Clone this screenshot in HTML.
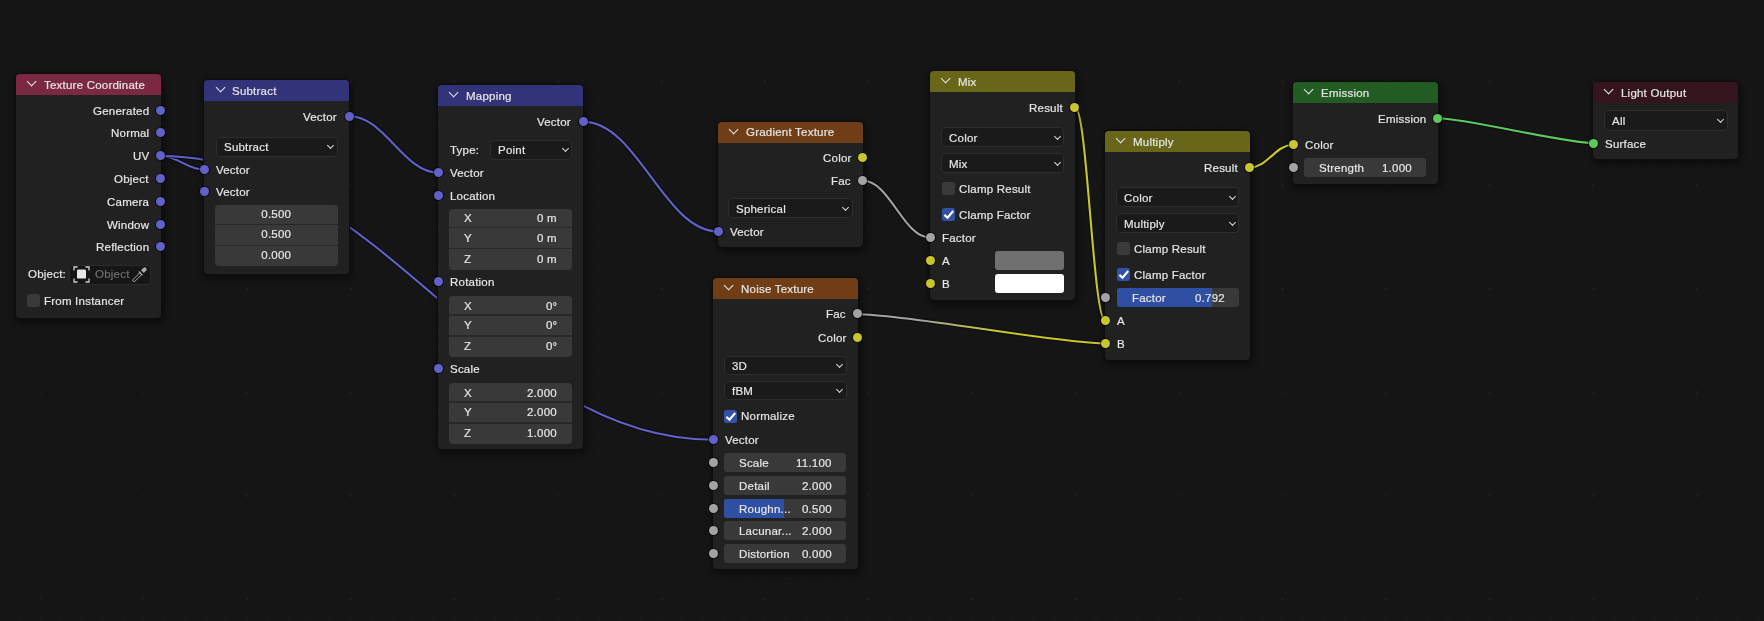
<!DOCTYPE html>
<html><head><meta charset="utf-8"><style>
*{margin:0;padding:0;box-sizing:border-box}
html,body{width:1764px;height:621px;overflow:hidden;background:#151515}
body{position:relative;font-family:"Liberation Sans",sans-serif;font-size:11.5px;letter-spacing:0.22px;color:#e6e6e6;-webkit-text-stroke-width:0.2px}
#grid{position:absolute;left:0;top:0;width:1764px;height:621px;
 background-image:radial-gradient(circle at 50% 50%, #202020 0.8px, transparent 1.4px), radial-gradient(circle at 50% 50%, #1b1b1b 0.7px, transparent 1.3px);
 background-size:103.555px 103.555px, 20.711px 20.711px;background-position:-11.58px 29.9px, 9.15px 9.25px}
#wires{position:absolute;left:0;top:0}
.node{position:absolute;background:#212121;border-radius:4px;box-shadow:0 0 0 1px #0d0d0d, 1px 3px 7px 2px rgba(0,0,0,0.45)}
.hdr{position:absolute;left:0;top:0;right:0;border-radius:4px 4px 0 0}
.chev{position:absolute;left:12.3px;top:4px;width:7.2px;height:7.2px;border-right:1.3px solid #e8e8e8;border-bottom:1.3px solid #e8e8e8;transform:rotate(45deg)}
.ttl{position:absolute;left:27.5px;top:4.5px;white-space:nowrap}
.sock{position:absolute;width:9px;height:9px;border-radius:50%;box-shadow:0 0 0 1px rgba(0,0,0,0.55)}
.lbl{position:absolute;white-space:nowrap;line-height:14px}
.dd{position:absolute;background:#1a1a1a;border:1px solid #2d2d2d;border-radius:4px}
.ddt{position:absolute;left:7px;top:2.4px;line-height:14px}
.ddc{position:absolute;right:3.5px;top:5.5px;width:5px;height:5px;border-right:1.3px solid #ddd;border-bottom:1.3px solid #ddd;transform:rotate(45deg)}
.cb{position:absolute;width:13px;height:13px;border-radius:2.5px;background:#3a3a3a}
.cb.on{background:#3352a5}
.vf{position:absolute;background:#393939;border-radius:4px;overflow:hidden}
.vf .sep{position:absolute;left:0;right:0;height:1.2px;background:#282828}
.vf .c{position:absolute;left:0;right:0;text-align:center;line-height:14px}
.vf .k{position:absolute;left:15px;line-height:14px}
.vf .v{position:absolute;right:14.5px;line-height:14px}
.sl{position:absolute;background:#393939;border-radius:3px;overflow:hidden}
.sl .fill{position:absolute;left:0;top:0;bottom:0;background:#2f4fa3}
.sl .sn{position:absolute;left:15px;top:3px;line-height:14px}
.sl .sv{position:absolute;right:14px;top:3px;line-height:14px}
.objf{position:absolute;background:#161616;border:1px solid #2a2a2a;border-radius:4px}
.objf .ph{position:absolute;left:25px;top:1px;color:#6e6e6e;line-height:14px}
.sw{position:absolute;border-radius:3px}
.r{text-align:right}
.lbl,.ttl,.ddt,.vf span,.sl span,.ph{will-change:transform}
</style></head>
<body><div id="grid"></div>
<svg id="wires" width="1764" height="621"><defs><linearGradient id="g1" gradientUnits="userSpaceOnUse" x1="858" y1="0" x2="1105" y2="0"><stop offset="0.25" stop-color="#a3a3a3"/><stop offset="0.58" stop-color="#c7c72b"/></linearGradient></defs><path d="M160.8,156.0 C178.3,156.0 187.0,169.8 204.5,169.8" stroke="#0c0c0c" stroke-width="4.5" fill="none" opacity="0.7"/><path d="M160.8,156.0 C178.3,156.0 187.0,169.8 204.5,169.8" stroke="#6161c9" stroke-width="2.1" fill="none"/><path d="M160.8,156.0 C381.7,156.0 492.2,439.8 713.1,439.8" stroke="#0c0c0c" stroke-width="4.5" fill="none" opacity="0.7"/><path d="M160.8,156.0 C381.7,156.0 492.2,439.8 713.1,439.8" stroke="#6161c9" stroke-width="2.1" fill="none"/><path d="M349.5,116.3 C385.1,116.3 403.0,172.7 438.6,172.7" stroke="#0c0c0c" stroke-width="4.5" fill="none" opacity="0.7"/><path d="M349.5,116.3 C385.1,116.3 403.0,172.7 438.6,172.7" stroke="#6161c9" stroke-width="2.1" fill="none"/><path d="M583.6,121.9 C637.4,121.9 664.3,231.5 718.1,231.5" stroke="#0c0c0c" stroke-width="4.5" fill="none" opacity="0.7"/><path d="M583.6,121.9 C637.4,121.9 664.3,231.5 718.1,231.5" stroke="#6161c9" stroke-width="2.1" fill="none"/><path d="M863.1,180.8 C889.9,180.8 903.3,237.7 930.1,237.7" stroke="#0c0c0c" stroke-width="4.5" fill="none" opacity="0.7"/><path d="M863.1,180.8 C889.9,180.8 903.3,237.7 930.1,237.7" stroke="#a3a3a3" stroke-width="2.1" fill="none"/><path d="M1075.1,107.1 C1087.1,107.1 1093.1,320.4 1105.1,320.4" stroke="#0c0c0c" stroke-width="4.5" fill="none" opacity="0.7"/><path d="M1075.1,107.1 C1087.1,107.1 1093.1,320.4 1105.1,320.4" stroke="#c7c72b" stroke-width="2.1" fill="none"/><path d="M857.9,314.2 C907.3,314.2 1055.7,343.3 1105.1,343.3" stroke="#0c0c0c" stroke-width="4.5" fill="none" opacity="0.7"/><path d="M857.9,314.2 C907.3,314.2 1055.7,343.3 1105.1,343.3" stroke="url(#g1)" stroke-width="2.1" fill="none"/><path d="M1250.1,167.5 C1267.3,167.5 1275.8,144.7 1293.0,144.7" stroke="#0c0c0c" stroke-width="4.5" fill="none" opacity="0.7"/><path d="M1250.1,167.5 C1267.3,167.5 1275.8,144.7 1293.0,144.7" stroke="#c7c72b" stroke-width="2.1" fill="none"/><path d="M1437.6,118.3 C1465.6,118.3 1565.0,143.2 1593.0,143.2" stroke="#0c0c0c" stroke-width="4.5" fill="none" opacity="0.7"/><path d="M1437.6,118.3 C1465.6,118.3 1565.0,143.2 1593.0,143.2" stroke="#5ec75e" stroke-width="2.1" fill="none"/></svg>
<div class="node" style="left:16px;top:74px;width:145px;height:244px"><div class="hdr" style="height:21px;background:#7b2942"><span class="chev"></span><span class="ttl">Texture Coordinate</span></div><div class="lbl r" style="right:12px;top:29.5px">Generated</div><div class="sock" style="left:140.4px;top:31.5px;background:#6161c9"></div><div class="lbl r" style="right:12px;top:52.3px">Normal</div><div class="sock" style="left:140.4px;top:54.3px;background:#6161c9"></div><div class="lbl r" style="right:12px;top:75.1px">UV</div><div class="sock" style="left:140.4px;top:77.1px;background:#6161c9"></div><div class="lbl r" style="right:12px;top:97.9px">Object</div><div class="sock" style="left:140.4px;top:99.9px;background:#6161c9"></div><div class="lbl r" style="right:12px;top:120.7px">Camera</div><div class="sock" style="left:140.4px;top:122.7px;background:#6161c9"></div><div class="lbl r" style="right:12px;top:143.5px">Window</div><div class="sock" style="left:140.4px;top:145.5px;background:#6161c9"></div><div class="lbl r" style="right:12px;top:166.3px">Reflection</div><div class="sock" style="left:140.4px;top:168.3px;background:#6161c9"></div><div class="lbl " style="left:11.5px;top:193.0px">Object:</div><div class="objf" style="left:52.5px;top:191.3px;width:82px;height:19.6px"><svg width="17" height="17" style="position:absolute;left:3px;top:-0.5px" viewBox="0 0 17 17"><path d="M1 4.5V1h3.5M12.5 1H16v3.5M16 12.5V16h-3.5M4.5 16H1v-3.5" stroke="#cfcfcf" stroke-width="1.3" fill="none"/><rect x="4" y="3.6" width="9" height="9" rx="1.2" fill="#e8e8e8"/></svg><span class="ph">Object</span><svg width="17" height="17" style="position:absolute;left:61px;top:-0.5px" viewBox="0 0 17 17"><path d="M2.2 15.2l-0.6-1.2 7.2-7.2 1.8 1.8-7.2 7.2z" stroke="#a8a8a8" stroke-width="1" fill="none"/><path d="M7.8 5.6l3.6 3.6" stroke="#a8a8a8" stroke-width="1.4"/><path d="M10 4.2l2.3-2.3a1.6 1.6 0 0 1 2.8 2.8L12.8 7z" fill="#a8a8a8"/></svg></div><div class="cb" style="left:11px;top:220.4px"></div><div class="lbl " style="left:28px;top:220.2px">From Instancer</div></div><div class="node" style="left:204.4px;top:80px;width:145px;height:193.5px"><div class="hdr" style="height:21px;background:#33337a"><span class="chev"></span><span class="ttl">Subtract</span></div><div class="lbl r" style="right:12px;top:29.8px">Vector</div><div class="sock" style="left:140.4px;top:31.8px;background:#6161c9"></div><div class="dd" style="left:11.5px;top:56.6px;width:122px;height:20px"><span class="ddt">Subtract</span><span class="ddc"></span></div><div class="lbl " style="left:11.5px;top:83.3px">Vector</div><div class="sock" style="left:-4.5px;top:85.3px;background:#6161c9"></div><div class="lbl " style="left:11.5px;top:105.2px">Vector</div><div class="sock" style="left:-4.5px;top:107.2px;background:#6161c9"></div><div class="vf" style="left:11px;top:124.6px;width:122.5px;height:61.9px"><span class="c" style="top:2.9px">0.500</span><span class="c" style="top:22.7px">0.500</span><span class="c" style="top:43.8px">0.000</span><div class="sep" style="top:19.1px"></div><div class="sep" style="top:40.3px"></div></div></div><div class="node" style="left:438.2px;top:85.2px;width:145px;height:364px"><div class="hdr" style="height:21px;background:#33337a"><span class="chev"></span><span class="ttl">Mapping</span></div><div class="lbl r" style="right:12px;top:30.2px">Vector</div><div class="sock" style="left:140.4px;top:32.2px;background:#6161c9"></div><div class="lbl " style="left:11.5px;top:58.0px">Type:</div><div class="dd" style="left:52px;top:54.5px;width:82px;height:20px"><span class="ddt">Point</span><span class="ddc"></span></div><div class="lbl " style="left:11.5px;top:81.0px">Vector</div><div class="sock" style="left:-4.5px;top:83.0px;background:#6161c9"></div><div class="lbl " style="left:11.5px;top:103.4px">Location</div><div class="sock" style="left:-4.5px;top:105.4px;background:#6161c9"></div><div class="vf" style="left:11px;top:123.6px;width:122.5px;height:60.8px"><span class="k" style="top:2.5px">X</span><span class="v" style="top:2.5px">0 m</span><span class="k" style="top:21.8px">Y</span><span class="v" style="top:21.8px">0 m</span><span class="k" style="top:42.8px">Z</span><span class="v" style="top:42.8px">0 m</span><div class="sep" style="top:18.3px"></div><div class="sep" style="top:39.3px"></div></div><div class="lbl " style="left:11.5px;top:190.2px">Rotation</div><div class="sock" style="left:-4.5px;top:192.2px;background:#6161c9"></div><div class="vf" style="left:11px;top:210.9px;width:122.5px;height:60.8px"><span class="k" style="top:2.5px">X</span><span class="v" style="top:2.5px">0°</span><span class="k" style="top:21.8px">Y</span><span class="v" style="top:21.8px">0°</span><span class="k" style="top:42.8px">Z</span><span class="v" style="top:42.8px">0°</span><div class="sep" style="top:18.3px"></div><div class="sep" style="top:39.3px"></div></div><div class="lbl " style="left:11.5px;top:277.2px">Scale</div><div class="sock" style="left:-4.5px;top:279.2px;background:#6161c9"></div><div class="vf" style="left:11px;top:297.9px;width:122.5px;height:60.8px"><span class="k" style="top:2.5px">X</span><span class="v" style="top:2.5px">2.000</span><span class="k" style="top:21.8px">Y</span><span class="v" style="top:21.8px">2.000</span><span class="k" style="top:42.8px">Z</span><span class="v" style="top:42.8px">1.000</span><div class="sep" style="top:18.3px"></div><div class="sep" style="top:39.3px"></div></div></div><div class="node" style="left:718.1px;top:121.6px;width:145px;height:125.5px"><div class="hdr" style="height:21px;background:#703e16"><span class="chev"></span><span class="ttl">Gradient Texture</span></div><div class="lbl r" style="right:12px;top:29.7px">Color</div><div class="sock" style="left:140.4px;top:31.7px;background:#c7c72b"></div><div class="lbl r" style="right:12px;top:52.7px">Fac</div><div class="sock" style="left:140.4px;top:54.7px;background:#a3a3a3"></div><div class="dd" style="left:10px;top:76.7px;width:124.8px;height:20.2px"><span class="ddt">Spherical</span><span class="ddc"></span></div><div class="lbl " style="left:11.5px;top:103.4px">Vector</div><div class="sock" style="left:-4.5px;top:105.4px;background:#6161c9"></div></div><div class="node" style="left:713.1px;top:278.2px;width:145px;height:290.7px"><div class="hdr" style="height:21px;background:#703e16"><span class="chev"></span><span class="ttl">Noise Texture</span></div><div class="lbl r" style="right:12px;top:29.1px">Fac</div><div class="sock" style="left:140.4px;top:31.1px;background:#a3a3a3"></div><div class="lbl r" style="right:12px;top:52.4px">Color</div><div class="sock" style="left:140.4px;top:54.4px;background:#c7c72b"></div><div class="dd" style="left:10.7px;top:77.5px;width:123px;height:19px"><span class="ddt">3D</span><span class="ddc"></span></div><div class="dd" style="left:10.7px;top:102.7px;width:123px;height:19px"><span class="ddt">fBM</span><span class="ddc"></span></div><div class="cb on" style="left:10.9px;top:131.4px"><svg width="13" height="13" style="position:absolute;left:0;top:0"><path d="M2.4 6.9L5.5 9.7L11.2 3" stroke="#fff" stroke-width="2.1" fill="none"/></svg></div><div class="lbl " style="left:27.9px;top:131.2px">Normalize</div><div class="lbl " style="left:11.5px;top:155.1px">Vector</div><div class="sock" style="left:-4.5px;top:157.1px;background:#6161c9"></div><div class="sl" style="left:10.9px;top:174.8px;width:122px;height:19px"><span class="sn">Scale</span><span class="sv">11.100</span></div><div class="sock" style="left:-4.5px;top:179.8px;background:#a3a3a3"></div><div class="sl" style="left:10.9px;top:197.60000000000002px;width:122px;height:19px"><span class="sn">Detail</span><span class="sv">2.000</span></div><div class="sock" style="left:-4.5px;top:202.6px;background:#a3a3a3"></div><div class="sl" style="left:10.9px;top:220.4px;width:122px;height:19px"><div class="fill" style="width:60px"></div><span class="sn">Roughn...</span><span class="sv">0.500</span></div><div class="sock" style="left:-4.5px;top:225.4px;background:#a3a3a3"></div><div class="sl" style="left:10.9px;top:243.20000000000002px;width:122px;height:19px"><span class="sn">Lacunar...</span><span class="sv">2.000</span></div><div class="sock" style="left:-4.5px;top:248.2px;background:#a3a3a3"></div><div class="sl" style="left:10.9px;top:266.0px;width:122px;height:19px"><span class="sn">Distortion</span><span class="sv">0.000</span></div><div class="sock" style="left:-4.5px;top:271.0px;background:#a3a3a3"></div></div><div class="node" style="left:930.1px;top:71.3px;width:145px;height:229.1px"><div class="hdr" style="height:21px;background:#686618"><span class="chev"></span><span class="ttl">Mix</span></div><div class="lbl r" style="right:12px;top:29.3px">Result</div><div class="sock" style="left:140.4px;top:31.3px;background:#c7c72b"></div><div class="dd" style="left:11.3px;top:55.9px;width:123px;height:20px"><span class="ddt">Color</span><span class="ddc"></span></div><div class="dd" style="left:11.3px;top:82.2px;width:123px;height:19.3px"><span class="ddt">Mix</span><span class="ddc"></span></div><div class="cb" style="left:11.5px;top:111.1px"></div><div class="lbl " style="left:28.5px;top:110.9px">Clamp Result</div><div class="cb on" style="left:11.5px;top:136.5px"><svg width="13" height="13" style="position:absolute;left:0;top:0"><path d="M2.4 6.9L5.5 9.7L11.2 3" stroke="#fff" stroke-width="2.1" fill="none"/></svg></div><div class="lbl " style="left:28.5px;top:136.3px">Clamp Factor</div><div class="lbl " style="left:11.5px;top:159.9px">Factor</div><div class="sock" style="left:-4.5px;top:161.9px;background:#a3a3a3"></div><div class="lbl " style="left:11.5px;top:182.8px">A</div><div class="sock" style="left:-4.5px;top:184.8px;background:#c7c72b"></div><div class="lbl " style="left:11.5px;top:205.8px">B</div><div class="sock" style="left:-4.5px;top:207.8px;background:#c7c72b"></div><div class="sw" style="left:65px;top:180.1px;width:69px;height:18.5px;background:#707070"></div><div class="sw" style="left:65px;top:203px;width:69px;height:18.6px;background:#ffffff"></div></div><div class="node" style="left:1105.1px;top:131.3px;width:145px;height:229.1px"><div class="hdr" style="height:21px;background:#686618"><span class="chev"></span><span class="ttl">Multiply</span></div><div class="lbl r" style="right:12px;top:29.3px">Result</div><div class="sock" style="left:140.4px;top:31.3px;background:#c7c72b"></div><div class="dd" style="left:11.3px;top:55.9px;width:123px;height:20px"><span class="ddt">Color</span><span class="ddc"></span></div><div class="dd" style="left:11.3px;top:82.2px;width:123px;height:19.3px"><span class="ddt">Multiply</span><span class="ddc"></span></div><div class="cb" style="left:11.5px;top:111.1px"></div><div class="lbl " style="left:28.5px;top:110.9px">Clamp Result</div><div class="cb on" style="left:11.5px;top:136.5px"><svg width="13" height="13" style="position:absolute;left:0;top:0"><path d="M2.4 6.9L5.5 9.7L11.2 3" stroke="#fff" stroke-width="2.1" fill="none"/></svg></div><div class="lbl " style="left:28.5px;top:136.3px">Clamp Factor</div><div class="sl" style="left:12px;top:156.5px;width:121.6px;height:19.3px"><div class="fill" style="width:95.4px"></div><span class="sn">Factor</span><span class="sv">0.792</span></div><div class="sock" style="left:-4.5px;top:161.9px;background:#a3a3a3"></div><div class="lbl " style="left:11.5px;top:182.6px">A</div><div class="sock" style="left:-4.5px;top:184.6px;background:#c7c72b"></div><div class="lbl " style="left:11.5px;top:205.5px">B</div><div class="sock" style="left:-4.5px;top:207.5px;background:#c7c72b"></div></div><div class="node" style="left:1293px;top:82.1px;width:145px;height:102.4px"><div class="hdr" style="height:21px;background:#225c22"><span class="chev"></span><span class="ttl">Emission</span></div><div class="lbl r" style="right:12px;top:29.7px">Emission</div><div class="sock" style="left:140.4px;top:31.7px;background:#5ec75e"></div><div class="lbl " style="left:11.5px;top:56.1px">Color</div><div class="sock" style="left:-4.5px;top:58.1px;background:#c7c72b"></div><div class="sl" style="left:10.7px;top:75.8px;width:122.4px;height:19.3px"><span class="sn">Strength</span><span class="sv">1.000</span></div><div class="sock" style="left:-4.5px;top:81.2px;background:#a3a3a3"></div></div><div class="node" style="left:1593px;top:81.7px;width:145px;height:77px"><div class="hdr" style="height:21.5px;background:#35151d"><span class="chev" style="top:4.8px"></span><span class="ttl" style="top:5.3px">Light Output</span></div><div class="dd" style="left:10.7px;top:28.6px;width:124px;height:20.3px"><span class="ddt">All</span><span class="ddc"></span></div><div class="lbl " style="left:11.5px;top:55.0px">Surface</div><div class="sock" style="left:-4.5px;top:57.0px;background:#5ec75e"></div></div>
</body></html>
